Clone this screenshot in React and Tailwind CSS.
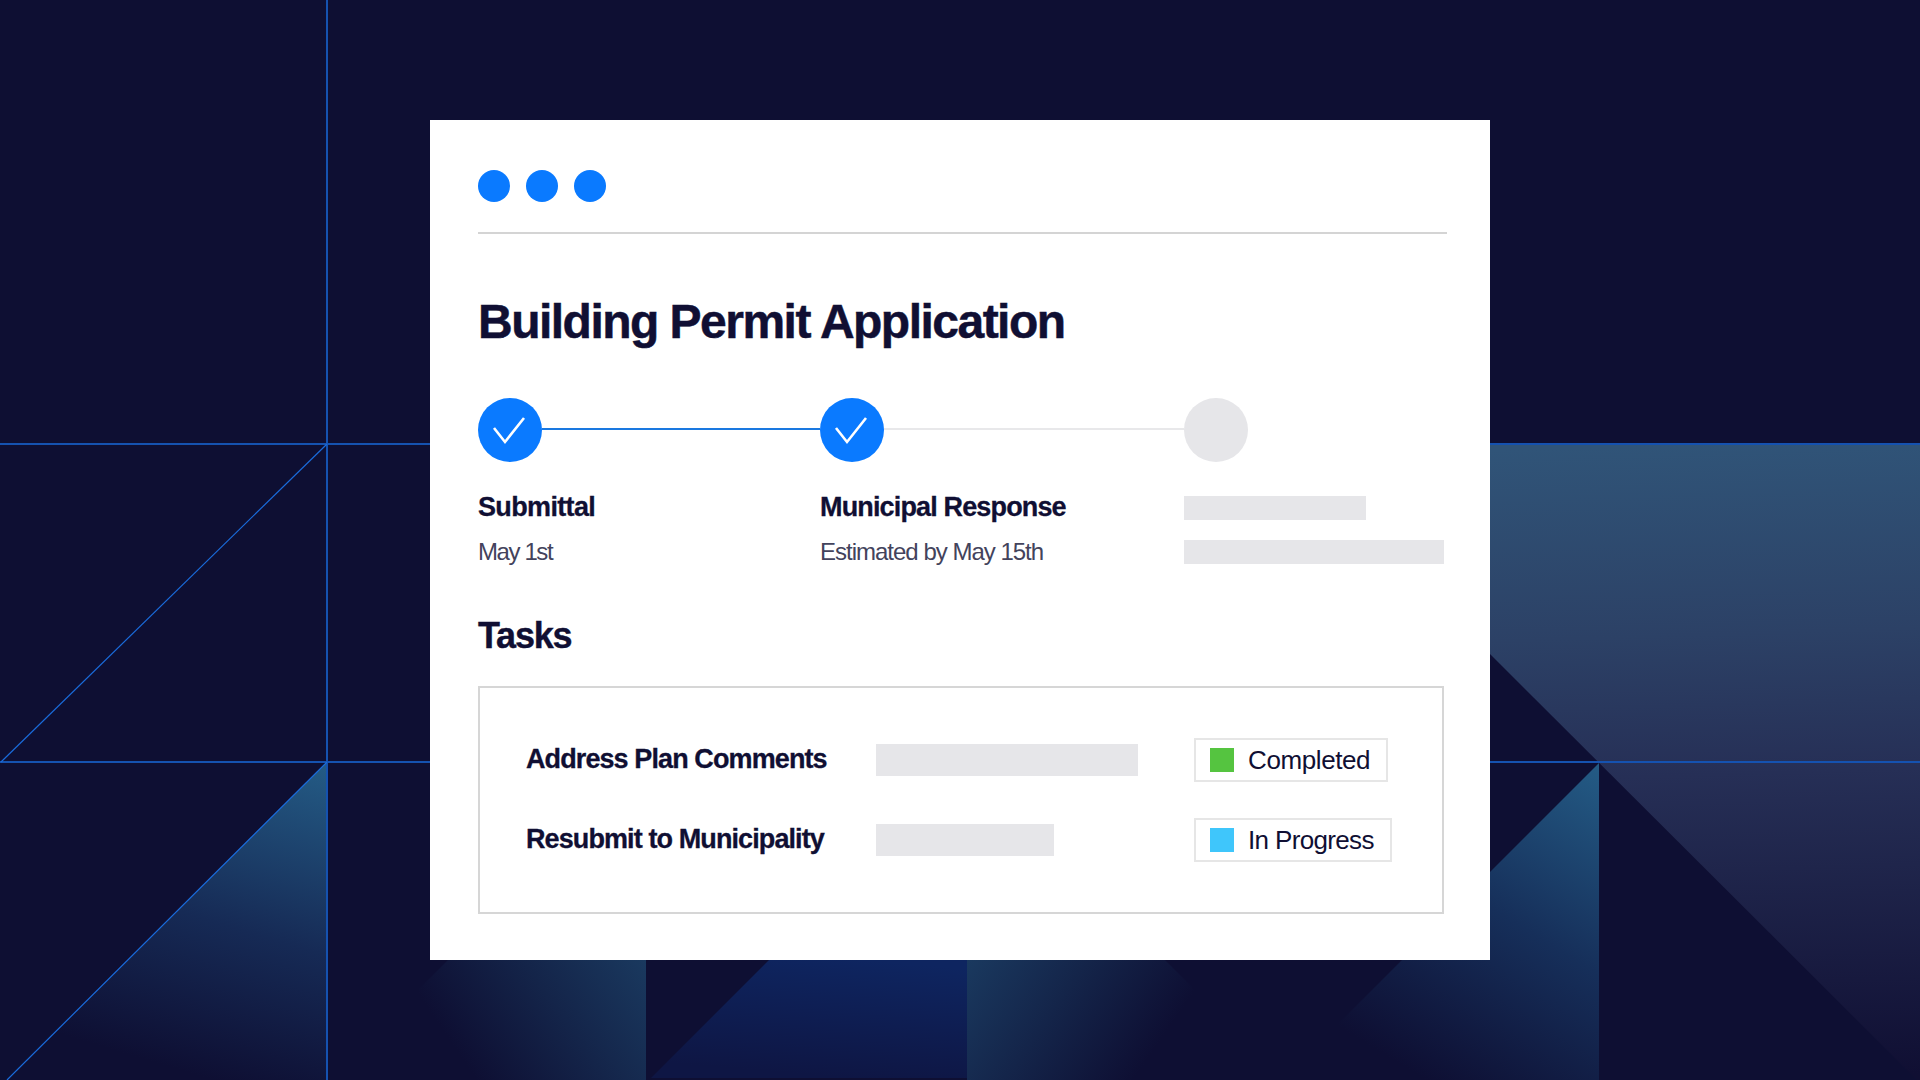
import React from 'react';

const Check = () => (
    <svg width="64" height="64" viewBox="0 0 64 64" fill="none">
        <polyline points="16,30 27,44 46,20" stroke="white" strokeWidth="2.6" />
    </svg>
);

// the dark geometric backdrop behind the card
const Backdrop = () => (
    <svg className="absolute inset-0" width="1920" height="1080" viewBox="0 0 1920 1080">
        <defs>
            <linearGradient id="leftTri" gradientUnits="userSpaceOnUse" x1="327" y1="762" x2="230" y2="1085">
                <stop offset="0" stopColor="#245c86" />
                <stop offset="0.55" stopColor="#162a55" />
                <stop offset="1" stopColor="#0e0f33" />
            </linearGradient>
            <linearGradient id="rightPanel" gradientUnits="userSpaceOnUse" x1="1700" y1="444" x2="1720" y2="1080">
                <stop offset="0" stopColor="#305478" />
                <stop offset="0.3" stopColor="#2c4166" />
                <stop offset="0.52" stopColor="#262f56" />
                <stop offset="1" stopColor="#100f33" />
            </linearGradient>
            <linearGradient id="rightTri" gradientUnits="userSpaceOnUse" x1="1599" y1="762" x2="1410" y2="1070">
                <stop offset="0" stopColor="#245c86" />
                <stop offset="0.5" stopColor="#162f5a" />
                <stop offset="1" stopColor="#0e0f33" />
            </linearGradient>
            <linearGradient id="botA" gradientUnits="userSpaceOnUse" x1="646" y1="950" x2="470" y2="1070">
                <stop offset="0" stopColor="#1a3a60" />
                <stop offset="1" stopColor="#0e0f33" />
            </linearGradient>
            <linearGradient id="botB" gradientUnits="userSpaceOnUse" x1="860" y1="960" x2="850" y2="1078">
                <stop offset="0" stopColor="#0e2560" />
                <stop offset="1" stopColor="#0e1644" />
            </linearGradient>
            <linearGradient id="botC" gradientUnits="userSpaceOnUse" x1="967" y1="950" x2="1140" y2="1070">
                <stop offset="0" stopColor="#1a3a60" />
                <stop offset="1" stopColor="#0e0f33" />
            </linearGradient>
        </defs>
        <polygon points="1490,444 1920,444 1920,1083 1490,654" fill="url(#rightPanel)" />
        <polygon points="1599,763 1599,1080 1282,1080" fill="url(#rightTri)" />
        <polygon points="327,762 327,1080 7,1080" fill="url(#leftTri)" />
        <polygon points="448,960 646,960 646,1080 328,1080" fill="url(#botA)" />
        <polygon points="769,960 967,960 967,1078 651,1078" fill="url(#botB)" />
        <polygon points="967,960 1165,960 1285,1080 967,1080" fill="url(#botC)" />
        <g stroke="#1552b0" strokeWidth="2" fill="none">
            <line x1="327" y1="0" x2="327" y2="1080" />
            <line x1="0" y1="444" x2="430" y2="444" />
            <line x1="0" y1="762" x2="430" y2="762" />
            <line x1="1490" y1="444" x2="1920" y2="444" />
            <line x1="1490" y1="762" x2="1920" y2="762" />
        </g>
        <g stroke="#1a6cdc" strokeWidth="1.2" fill="none">
            <line x1="327" y1="444" x2="1" y2="762" />
            <line x1="327" y1="762" x2="7" y2="1080" />
        </g>
    </svg>
);

const TaskRow = ({ name, barClass, swatchClass, status, badgeClass }) => (
    <div className="grid grid-cols-[350px_318px_auto] items-center h-11">
        <div className="text-[27px] leading-8 -mt-0.5 font-bold tracking-[-0.9px] text-[#100f33] [-webkit-text-stroke:0.3px_#100f33]">{name}</div>
        <div className={`h-8 bg-[#e6e6e9] ${barClass}`}></div>
        <div className={`h-11 border-2 border-[#e6e6e6] flex items-center pl-3.5 ${badgeClass}`}>
            <div className={`w-6 h-6 ${swatchClass}`}></div>
            <div className="ml-3.5 text-[26px] text-[#100f33]">{status}</div>
        </div>
    </div>
);

const App = () => {
    return (
        <div className="relative w-[1920px] h-[1080px] overflow-hidden bg-[#0e0f33] flex items-center justify-center font-['Liberation_Sans',sans-serif]">
            <Backdrop />
            <div className="relative w-[1060px] h-[840px] bg-white pl-12 pr-[43px] pt-[50px]">
                <div className="flex gap-4">
                    <div className="w-8 h-8 rounded-full bg-[#0a7aff]"></div>
                    <div className="w-8 h-8 rounded-full bg-[#0a7aff]"></div>
                    <div className="w-8 h-8 rounded-full bg-[#0a7aff]"></div>
                </div>
                <div className="mt-[30px] h-0.5 bg-[#d4d4d4]"></div>

                <h1 className="mt-[60px] text-[48px] leading-[56px] font-bold tracking-[-1.52px] text-[#100f33] [-webkit-text-stroke:0.5px_#100f33]">Building Permit Application</h1>

                <div className="mt-[48px] flex items-start">
                    <div className="w-16 h-16 rounded-full bg-[#0a7aff] shrink-0"><Check /></div>
                    <div className="w-[278px] h-0.5 mt-[30px] bg-[#1a78e0]"></div>
                    <div className="w-16 h-16 rounded-full bg-[#0a7aff] shrink-0"><Check /></div>
                    <div className="w-[300px] h-0.5 mt-[30px] bg-[#e8e8ea]"></div>
                    <div className="w-16 h-16 rounded-full bg-[#e6e6e9] shrink-0"></div>
                </div>

                <div className="mt-[30px] grid grid-cols-[342px_364px_260px]">
                    <div>
                        <div className="-mt-px text-[27px] leading-8 font-bold tracking-[-0.65px] text-[#100f33] [-webkit-text-stroke:0.3px_#100f33]">Submittal</div>
                        <div className="mt-[13px] text-[24px] leading-8 tracking-[-1.4px] text-[#43435c]">May 1st</div>
                    </div>
                    <div>
                        <div className="-mt-px text-[27px] leading-8 font-bold tracking-[-0.85px] text-[#100f33] [-webkit-text-stroke:0.3px_#100f33]">Municipal Response</div>
                        <div className="mt-[13px] text-[24px] leading-8 tracking-[-1px] text-[#43435c]">Estimated by May 15th</div>
                    </div>
                    <div>
                        <div className="w-[182px] h-6 mt-1 bg-[#e6e6e9]"></div>
                        <div className="w-[260px] h-6 mt-5 bg-[#e6e6e9]"></div>
                    </div>
                </div>

                <h2 className="mt-[46px] text-[36px] leading-[44px] font-bold tracking-[-1.2px] text-[#100f33] [-webkit-text-stroke:0.4px_#100f33]">Tasks</h2>

                <div className="mt-[28px] w-[966px] h-[228px] border-2 border-[#d6d6d6] pl-[46px] pt-[50px] flex flex-col gap-9">
                    <TaskRow name="Address Plan Comments" barClass="w-[262px]" swatchClass="bg-[#55c440]" status="Completed" badgeClass="w-[194px] tracking-[-0.4px]" />
                    <TaskRow name="Resubmit to Municipality" barClass="w-[178px]" swatchClass="bg-[#3fc6fb]" status="In Progress" badgeClass="w-[198px] tracking-[-0.65px]" />
                </div>
            </div>
        </div>
    );
};

export default App;
